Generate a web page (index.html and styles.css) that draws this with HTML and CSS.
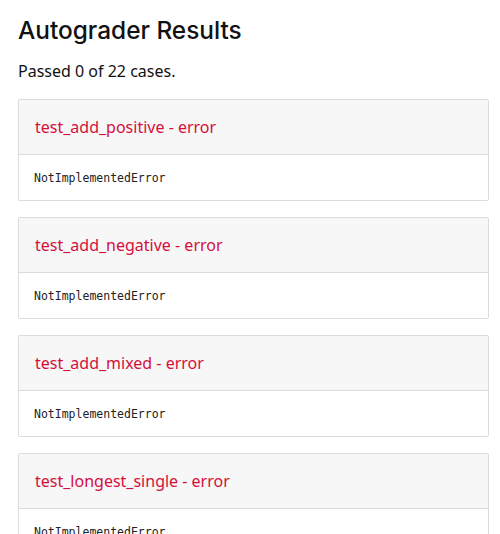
FILE: index.html
```html
<!DOCTYPE html>
<html>
<head>
<meta charset="utf-8">
<link rel="stylesheet" href="styles.css">
</head>
<body>
<main class="page">
  <h1 class="title">Autograder Results</h1>
  <p class="summary">Passed 0 of 22 cases.</p>
  <section class="card">
    <div class="card-header">test_add_positive - error</div>
    <div class="card-body">NotImplementedError</div>
  </section>
  <section class="card">
    <div class="card-header">test_add_negative - error</div>
    <div class="card-body">NotImplementedError</div>
  </section>
  <section class="card">
    <div class="card-header">test_add_mixed - error</div>
    <div class="card-body">NotImplementedError</div>
  </section>
  <section class="card">
    <div class="card-header">test_longest_single - error</div>
    <div class="card-body">NotImplementedError</div>
  </section>
</main>
</body>
</html>
```
FILE: styles.css
```css
html, body {
  margin: 0;
  padding: 0;
  background: #fff;
}
body {
  font-family: "Noto Sans", "Open Sans", sans-serif;
  color: #111;
}
.page {
  padding: 13px 11px 0 18px;
}
.title {
  margin: 0;
  font-family: "Inter", "Noto Sans", sans-serif;
  font-weight: 500;
  font-size: 24.4px;
  line-height: 34px;
  color: #111;
}
.summary {
  margin: 13px 0 0;
  font-size: 16px;
  line-height: 22px;
}
.card {
  margin-top: 16px;
  border: 1px solid #dcdcdc;
  border-radius: 2px;
}
.summary + .card {
  margin-top: 17px;
}
.card-header {
  background: #f7f7f7;
  border-bottom: 1px solid #dcdcdc;
  padding: 15px 16px;
  font-size: 16px;
  line-height: 24px;
  color: #d50f3c;
}
.card-body {
  padding: 15px 15px 13px;
  font-family: "DejaVu Sans Mono", monospace;
  font-size: 11.5px;
  line-height: 17px;
  color: #222;
}
```
